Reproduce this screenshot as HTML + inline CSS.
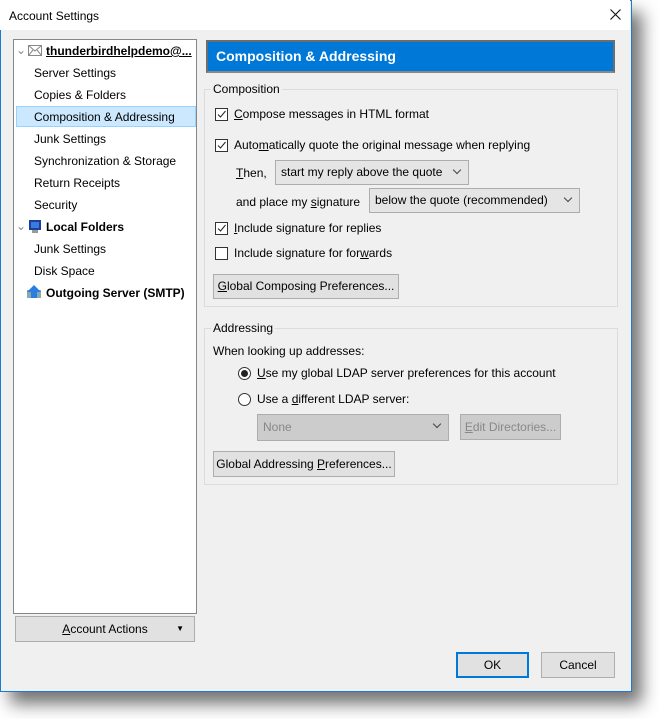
<!DOCTYPE html>
<html><head><style>
*{box-sizing:border-box}
body{margin:0;width:659px;height:719px;background:#fff;font-family:"Liberation Sans",sans-serif;font-size:12px;color:#000;position:relative;overflow:hidden}
.a{position:absolute}
.win{left:0;top:0;width:632px;height:692px;border:1px solid #1a7ad4;background:#f0f0f0;box-shadow:10px 12px 16px rgba(0,0,0,.55)}
.title{left:0;top:0;width:630px;height:30px;background:#fff}
.tree{left:13px;top:39px;width:184px;height:575px;background:#fff;border:1px solid #828790}
.ti{position:absolute;left:20px;white-space:nowrap}
.btn{position:absolute;background:#e1e1e1;border:1px solid #adadad;text-align:center;white-space:nowrap}
.fs{position:absolute;border:1px solid #dcdcdc}
.lg{position:absolute;top:-8px;left:6px;background:#f0f0f0;padding:0 2px}
.cb{position:absolute;width:13px;height:13px;border:1px solid #333;background:#fff}
.cb svg{position:absolute;left:0;top:0}
.sel{position:absolute;background:#e5e5e5;border:1px solid #adadad;padding-left:5px;line-height:22px}
.sel:after{content:"";position:absolute;right:8px;top:6px;width:5px;height:5px;border-right:1px solid #444;border-bottom:1px solid #444;transform:rotate(45deg)}
.rd{position:absolute;width:13px;height:13px;border:1px solid #333;border-radius:50%;background:#fff}
u{text-decoration:underline}
</style></head><body>
<div class="a win"></div>
<div class="a title"></div>
<div class="a" style="left:9px;top:9px">Account Settings</div>
<svg class="a" style="left:610px;top:9px" width="11" height="11"><path d="M0.5 0.5L10.5 10.5M10.5 0.5L0.5 10.5" stroke="#111" stroke-width="1.1"/></svg>

<div class="a tree">
 <div class="ti" style="left:2px;top:3px;color:#888">⌄</div>
 <svg class="a" style="left:14px;top:5px" width="14" height="11"><rect x="0.5" y="0.5" width="13" height="10" fill="#fff" stroke="#888"/><path d="M0.5 0.5L7 6L13.5 0.5M0.5 10.5L5 5M13.5 10.5L9 5" stroke="#888" fill="none"/></svg>
 <div class="ti" style="left:32px;top:4px;font-weight:bold;text-decoration:underline">thunderbirdhelpdemo@...</div>
 <div class="ti" style="top:26px">Server Settings</div>
 <div class="ti" style="top:48px">Copies &amp; Folders</div>
 <div class="a" style="left:2px;top:66px;width:180px;height:21px;background:#cce8ff;border:1px solid #99d1ff"></div>
 <div class="ti" style="top:70px">Composition &amp; Addressing</div>
 <div class="ti" style="top:92px">Junk Settings</div>
 <div class="ti" style="top:114px">Synchronization &amp; Storage</div>
 <div class="ti" style="top:136px">Return Receipts</div>
 <div class="ti" style="top:158px">Security</div>
 <div class="ti" style="left:2px;top:179px;color:#888">⌄</div>
 <svg class="a" style="left:14px;top:180px" width="14" height="14"><rect x="1" y="0" width="12" height="10" fill="#1c3e9e"/><rect x="3" y="2" width="8" height="6" fill="#3a7be0"/><rect x="4" y="10" width="6" height="3" fill="#999"/></svg>
 <div class="ti" style="left:32px;top:180px;font-weight:bold">Local Folders</div>
 <div class="ti" style="top:202px">Junk Settings</div>
 <div class="ti" style="top:224px">Disk Space</div>
 <svg class="a" style="left:12px;top:245px" width="16" height="14"><rect x="1" y="5" width="14" height="8" fill="#8aa"/><path d="M8 0L15 7H11V13H5V7H1Z" fill="#2a7de1"/></svg>
 <div class="ti" style="left:32px;top:246px;font-weight:bold">Outgoing Server (SMTP)</div>
</div>
<div class="btn" style="left:15px;top:616px;width:180px;height:26px;line-height:24px"><u>A</u>ccount Actions<span style="position:absolute;right:10px;font-size:8px">▼</span></div>

<div class="a" style="left:206px;top:40px;width:409px;height:33px;background:#0078d7;border:2px solid #6d6d6d;border-bottom-color:#888;color:#fff;font-weight:bold;font-size:14px;line-height:29px;padding-left:8px">Composition &amp; Addressing</div>

<div class="fs" style="left:204px;top:89px;width:414px;height:218px">
 <div class="lg">Composition</div>
 <div class="cb" style="left:10px;top:18px"><svg width="11" height="11"><path d="M2 5.5L4.5 8L9.5 2" stroke="#222" fill="none"/></svg></div>
 <div class="a" style="left:29px;top:17px"><u>C</u>ompose messages in HTML format</div>
 <div class="cb" style="left:10px;top:49px"><svg width="11" height="11"><path d="M2 5.5L4.5 8L9.5 2" stroke="#222" fill="none"/></svg></div>
 <div class="a" style="left:29px;top:48px">Auto<u>m</u>atically quote the original message when replying</div>
 <div class="a" style="left:31px;top:76px"><u>T</u>hen,</div>
 <div class="sel" style="left:70px;top:70px;width:194px;height:25px">start my reply above the quote</div>
 <div class="a" style="left:31px;top:105px">and place my <u>s</u>ignature</div>
 <div class="sel" style="left:164px;top:98px;width:211px;height:25px">below the quote (recommended)</div>
 <div class="cb" style="left:10px;top:132px"><svg width="11" height="11"><path d="M2 5.5L4.5 8L9.5 2" stroke="#222" fill="none"/></svg></div>
 <div class="a" style="left:29px;top:131px"><u>I</u>nclude signature for replies</div>
 <div class="cb" style="left:10px;top:157px"></div>
 <div class="a" style="left:29px;top:156px">Include signature for for<u>w</u>ards</div>
 <div class="btn" style="left:8px;top:184px;width:186px;height:25px;line-height:23px"><u>G</u>lobal Composing Preferences...</div>
</div>

<div class="fs" style="left:204px;top:328px;width:414px;height:157px">
 <div class="lg">Addressing</div>
 <div class="a" style="left:8px;top:15px">When looking up addresses:</div>
 <div class="rd" style="left:33px;top:38px"><div class="a" style="left:2px;top:2px;width:7px;height:7px;border-radius:50%;background:#222"></div></div>
 <div class="a" style="left:52px;top:37px"><u>U</u>se my global LDAP server preferences for this account</div>
 <div class="rd" style="left:33px;top:64px"></div>
 <div class="a" style="left:52px;top:63px">Use a <u>d</u>ifferent LDAP server:</div>
 <div class="sel" style="left:52px;top:85px;width:192px;height:27px;background:#ccc;color:#888;line-height:25px">None</div>
 <div class="btn" style="left:255px;top:85px;width:101px;height:26px;line-height:24px;background:#ccc;color:#888"><u>E</u>dit Directories...</div>
 <div class="btn" style="left:8px;top:122px;width:182px;height:26px;line-height:24px">Global Addressing <u>P</u>references...</div>
</div>

<div class="btn" style="left:456px;top:652px;width:73px;height:26px;line-height:22px;border:2px solid #0078d7">OK</div>
<div class="btn" style="left:541px;top:652px;width:74px;height:26px;line-height:24px">Cancel</div>
</body></html>
